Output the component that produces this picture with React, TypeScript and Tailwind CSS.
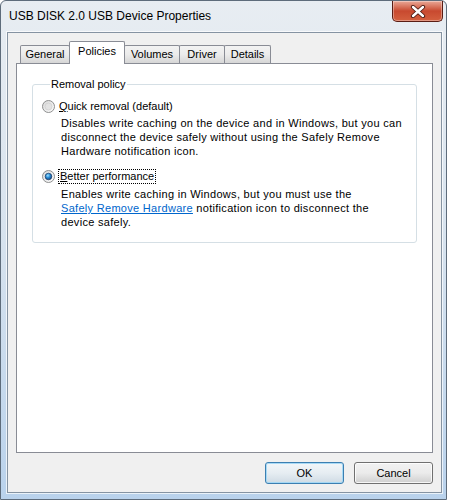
import React from "react";

const FONT = { fontFamily: '"Liberation Sans", Arial, sans-serif' };

const TABS = [
  { label: "General", w: "w-[50px]" },
  { label: "Policies", w: "w-[56px]", active: true },
  { label: "Volumes", w: "w-[56px]" },
  { label: "Driver", w: "w-[46px]" },
  { label: "Details", w: "w-[47px]" },
];

function Radio({ checked }: { checked?: boolean }) {
  return (
    <svg width="13" height="13" viewBox="0 0 13 13" className="shrink-0">
      <defs>
        <linearGradient id={checked ? "rbg1" : "rbg0"} x1="0" y1="0" x2="1" y2="1">
          <stop offset="0" stopColor="#d6d6d6" />
          <stop offset="1" stopColor="#ffffff" />
        </linearGradient>
        <radialGradient id="rdot" cx="0.4" cy="0.35" r="0.7">
          <stop offset="0" stopColor="#9fe0ff" />
          <stop offset="0.45" stopColor="#2a8fd8" />
          <stop offset="1" stopColor="#123d74" />
        </radialGradient>
      </defs>
      <circle cx="6.5" cy="6.5" r="6" fill={`url(#${checked ? "rbg1" : "rbg0"})`} stroke="#8e8f8f" />
      {checked ? (
        <circle cx="6.5" cy="6.5" r="3.3" fill="url(#rdot)" stroke="#1a3a66" strokeWidth="0.7" />
      ) : (
        <circle cx="6.5" cy="6.5" r="3.5" fill="#e3e3e3" stroke="#c9c9c9" strokeWidth="0.6" />
      )}
    </svg>
  );
}

export default function App() {
  return (
    <div className="w-[450px] h-[500px] bg-white overflow-hidden" style={FONT}>
      <div className="w-[447px] h-[500px] flex flex-col rounded-t-[6px] border border-[#5e6c7b] bg-gradient-to-b from-[#e8edf2] via-[#d6e2ee] to-[#b9d2ec]">
        {/* Title bar */}
        <div className="h-[31px] flex justify-between items-start">
          <span className="pl-[8px] pt-[8px] text-[12px] leading-[14px] text-black">
            USB DISK 2.0 USB Device Properties
          </span>
          <div className="mr-[3px] w-[51px] h-[21px] rounded-b-[5px] border border-t-0 border-[#5a1d14] bg-gradient-to-b from-[#e9a897] via-[#c8492f] to-[#d4603f] flex items-center justify-center shadow-[inset_0_0_0_1px_rgba(255,255,255,0.35)]">
            <svg width="16" height="13" viewBox="0 0 16 13">
              <path d="M3 2 L13 11 M13 2 L3 11" stroke="#4a1a12" strokeWidth="4.2" strokeLinecap="round" />
              <path d="M3 2 L13 11 M13 2 L3 11" stroke="#ffffff" strokeWidth="2.4" strokeLinecap="round" />
            </svg>
          </div>
        </div>

        {/* Client area */}
        <div className="ml-[6px] w-[435px] h-[461px] border border-[#8593a2] bg-[#f0f0f0] flex flex-col px-[8px] pt-[8px] shadow-[0_0_0_1px_rgba(255,255,255,0.7)]">
          {/* Tabs */}
          <div className="flex items-end h-[22px] pl-[4px] relative z-10">
            {TABS.map((t, i) => (
              <div
                key={t.label}
                className={
                  (i > 0 ? "-ml-px " : "") +
                  t.w +
                  (t.active
                    ? " h-[23px] -mb-px bg-white border border-b-0 border-[#898c95] rounded-t-[2px] flex items-start justify-center pt-[3px] z-10"
                    : " h-[18px] bg-gradient-to-b from-[#f3f3f3] via-[#ebebeb] to-[#d6d6d6] border border-b-0 border-[#898c95] rounded-t-[2px] flex items-center justify-center")
                }
              >
                <span className="text-[11px] leading-[13px] text-black">{t.label}</span>
              </div>
            ))}
          </div>

          {/* Tab pane */}
          <div className="h-[390px] bg-white border border-[#898c95] px-[15px] pt-[14px]">
            <fieldset className="border border-[#d5dfe5] rounded-[3px] pl-[9px] pr-[6px] pb-[13px]">
              <legend className="ml-[8px] px-[1px] text-[11px] leading-[13px] text-black">Removal policy</legend>

              <div className="mt-[8px] flex items-center h-[14px] gap-[4px]">
                <Radio />
                <span className="text-[11px] leading-[14px] text-black">
                  <span className="underline">Q</span>uick removal (default)
                </span>
              </div>
              <p className="mt-[3px] ml-[19px] text-[11px] leading-[14px] tracking-[0.3px] whitespace-nowrap text-black">
                Disables write caching on the device and in Windows, but you can
                <br />
                disconnect the device safely without using the Safely Remove
                <br />
                Hardware notification icon.
              </p>

              <div className="mt-[11px] flex items-center h-[15px] gap-[3px]">
                <Radio checked />
                <span className="border border-dotted border-black px-[1px] text-[11px] leading-[13px] text-black">
                  <span className="underline">B</span>etter performance
                </span>
              </div>
              <p className="mt-[3px] ml-[19px] text-[11px] leading-[14px] tracking-[0.3px] whitespace-nowrap text-black">
                Enables write caching in Windows, but you must use the
                <br />
                <span className="text-[#0066cc] underline">Safely Remove Hardware</span> notification icon to disconnect the
                <br />
                device safely.
              </p>
            </fieldset>
          </div>

          {/* Buttons */}
          <div className="mt-[9px] flex justify-end gap-[10px]">
            <button className="w-[79px] h-[22px] rounded-[3px] border border-[#3c7fb1] bg-gradient-to-b from-[#f2f6f9] via-[#e6edf2] to-[#cfdbe4] text-[11px] text-black shadow-[inset_0_0_0_1px_rgba(160,215,245,0.9)]">
              OK
            </button>
            <button className="w-[79px] h-[22px] rounded-[3px] border border-[#707070] bg-gradient-to-b from-[#f2f2f2] via-[#ebebeb] to-[#cfcfcf] text-[11px] text-black shadow-[inset_0_0_0_1px_rgba(255,255,255,0.8)]">
              Cancel
            </button>
          </div>
        </div>
      </div>
    </div>
  );
}
